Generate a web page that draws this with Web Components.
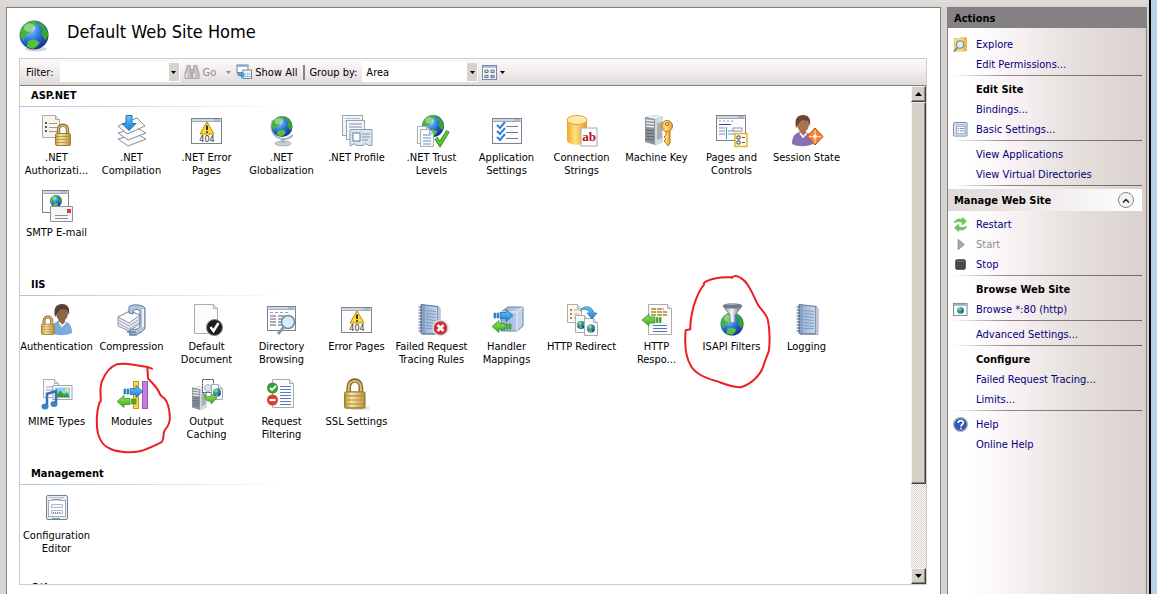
<!DOCTYPE html>
<html lang="en">
<head>
<meta charset="utf-8">
<title>Default Web Site Home</title>
<style>
html, body {
    margin: 0;
    height: 100%;
    overflow: hidden;
}

body {
    --link-colour: #00007b;
    --face-colour: #d4d0c8;
    font-family: Tahoma, "DejaVu Sans Condensed", "DejaVu Sans", sans-serif;
    font-size: 11px;
    line-height: 13px;
    color: #000;
    background: #b9d1ea;
}
</style>
</head>
<body>
<manager-window>
    <site-home heading="Default Web Site Home">
        <filter-bar slot="toolbar"></filter-bar>
        <feature-group heading="ASP.NET">
            <feature-item icon="authorization" label=".NET Authorizati..."></feature-item>
            <feature-item icon="compilation" label=".NET Compilation"></feature-item>
            <feature-item icon="errors" label=".NET Error Pages"></feature-item>
            <feature-item icon="globalization" label=".NET Globalization"></feature-item>
            <feature-item icon="profile" label=".NET Profile"></feature-item>
            <feature-item icon="trust" label=".NET Trust Levels"></feature-item>
            <feature-item icon="appsettings" label="Application Settings"></feature-item>
            <feature-item icon="connection" label="Connection Strings"></feature-item>
            <feature-item icon="machinekey" label="Machine Key"></feature-item>
            <feature-item icon="controls" label="Pages and Controls"></feature-item>
            <feature-item icon="session" label="Session State"></feature-item>
            <feature-item icon="smtp" label="SMTP E-mail"></feature-item>
        </feature-group>
        <feature-group heading="IIS">
            <feature-item icon="authentication" label="Authentication"></feature-item>
            <feature-item icon="compression" label="Compression"></feature-item>
            <feature-item icon="defaultdoc" label="Default Document"></feature-item>
            <feature-item icon="directory" label="Directory Browsing"></feature-item>
            <feature-item icon="errors" label="Error Pages"></feature-item>
            <feature-item icon="failed" label="Failed Request Tracing Rules"></feature-item>
            <feature-item icon="handlers" label="Handler Mappings"></feature-item>
            <feature-item icon="redirect" label="HTTP Redirect"></feature-item>
            <feature-item icon="response" label="HTTP&#10;Respo..."></feature-item>
            <feature-item icon="isapi" label="ISAPI Filters"><pen-circle slot="mark" shape="tall"></pen-circle></feature-item>
            <feature-item icon="logging" label="Logging"></feature-item>
            <feature-item icon="mime" label="MIME Types"></feature-item>
            <feature-item icon="modules" label="Modules"><pen-circle slot="mark" shape="small"></pen-circle></feature-item>
            <feature-item icon="caching" label="Output Caching"></feature-item>
            <feature-item icon="filtering" label="Request Filtering"></feature-item>
            <feature-item icon="ssl" label="SSL Settings"></feature-item>
        </feature-group>
        <feature-group heading="Management">
            <feature-item icon="config" label="Configuration Editor"></feature-item>
        </feature-group>
        <feature-group heading="Other"></feature-group>
    </site-home>
    <actions-pane slot="side" heading="Actions">
        <action-section>
            <action-item icon="explore">Explore</action-item>
            <action-item>Edit Permissions...</action-item>
        </action-section>
        <action-section heading="Edit Site">
            <action-item>Bindings...</action-item>
            <action-item icon="settings">Basic Settings...</action-item>
        </action-section>
        <action-section>
            <action-item>View Applications</action-item>
            <action-item>View Virtual Directories</action-item>
        </action-section>
        <action-section bar="Manage Web Site">
            <action-item icon="restart">Restart</action-item>
            <action-item icon="start" disabled>Start</action-item>
            <action-item icon="stop">Stop</action-item>
        </action-section>
        <action-section heading="Browse Web Site">
            <action-item icon="browse">Browse *:80 (http)</action-item>
        </action-section>
        <action-section>
            <action-item>Advanced Settings...</action-item>
        </action-section>
        <action-section heading="Configure">
            <action-item>Failed Request Tracing...</action-item>
            <action-item>Limits...</action-item>
        </action-section>
        <action-section>
            <action-item icon="help">Help</action-item>
            <action-item>Online Help</action-item>
        </action-section>
    </actions-pane>
</manager-window>

<script>
// ---- icon parts ----

const globe = (cx, cy, r) => `
<g transform="translate(${cx} ${cy}) scale(${r / 10})">
<circle r="10" fill="url(#sea)"/>
<path d="M-9 -4C-7 -8 -3 -10 1 -10L2 -7L-1 -5L-2 -2L-6 0L-7 4L-9.500 1Z" fill="#46b52e"/>
<path d="M3 -9.500C7 -8 9 -4 10 0L8 4L6 1L5 -1L6 -4L4 -6Z" fill="#3aa52b"/>
<path d="M-4 4L0 3L4 5L2 8L-1 9.600L-5 8Z" fill="#55c03a"/>
<ellipse cx="-3" cy="-5" rx="4" ry="3" fill="#fff" opacity=".4"/>
</g>`;

const page = (x, y, w, h, fill = '#fbfbfc') => `
<path d="M${x} ${y}h${w - 4}l4 4v${h - 4}h${-w}z" fill="${fill}" stroke="#a9adb3"/>
<path d="M${x + w - 4} ${y}v4h4" fill="#e4e6ea" stroke="#a9adb3"/>`;

const win = (x, y, w, h) => `
<rect x="${x}" y="${y}" width="${w}" height="${h}" fill="#fdfdfe" stroke="#7b8190"/>
<path d="M${x + 1} ${y + 1.5}h${w - 2}" stroke="#cfd6e2" stroke-width="2"/>
<path d="M${x + w - 7} ${y + 1.5}h6" stroke="#5c6474" stroke-dasharray="1 1"/>
<path d="M${x} ${y + 3}h${w}" stroke="#a4abb9"/>`;

const lock = (x, y, s) => `
<g transform="translate(${x} ${y}) scale(${s})">
<path d="M3.500 11V6C3.500 -.5 12.500 -.5 12.500 6V11" fill="none" stroke="#80642a" stroke-width="3.400"/>
<path d="M3.500 11V6C3.500 0 12.500 0 12.500 6V11" fill="none" stroke="#d9bd78" stroke-width="1.600"/>
<rect x=".5" y="9.500" width="15" height="12" rx="1.500" fill="url(#brass)" stroke="#a07c30"/>
<path d="M1 12.500h14M1 15.500h14M1 18.500h14" stroke="#b08a3a" stroke-width=".8"/>
</g>`;

const lines = (x, y, w, n, gap, colour) =>
  Array.from({ length: n }, (_, i) => `<path d="M${x} ${y + i * gap}h${w}" stroke="${colour}"/>`).join('');

const toRight = (x, y) => `
<g transform="translate(${x} ${y})" fill="#2f9be6" stroke="#1765ab" stroke-width=".7">
<path d="M0 4h1.500v5H0zM3 4h1.500v5H3z"/><path d="M6 3.500h6V.5l7 6-7 6v-3H6z" fill="url(#blue)"/></g>`;

const toLeft = (x, y) => `
<g transform="translate(${x} ${y})" fill="#5ac428" stroke="#2d8c17" stroke-width=".7">
<path d="M17.500 4H19v5h-1.500zM14.500 4H16v5h-1.500z"/><path d="M13 3.500H7V.5l-7 6 7 6v-3h6z" fill="url(#green)"/></g>`;

const server = (x, y, s = 1) => `
<g transform="translate(${x} ${y}) scale(${s})">
<path d="M0 2l11-2 7 2v25l-8 3-10-3z" fill="#8d949d"/>
<path d="M10 4l8-2v25l-8 4z" fill="#d6dadd"/>
<path d="M0 2l11-2 7 2-8 2z" fill="#eceff0"/>
<path d="M1 5l8 1M1 8l8 1M1 11l8 1" stroke="#e9edf0" stroke-width="1.500"/>
<path d="M1 15l8 1M1 18l8 1M1 21l8 1M1 24l8 1" stroke="#5c636d"/>
<path d="M12 8l5-1v16l-5 2z" fill="#a8aeb2"/></g>`;

const notebook = (x, y) => `
<g transform="translate(${x} ${y})">
<path d="M3 0l17 2v27l-17 0z" fill="url(#book)" stroke="#5a7095"/>
<path d="M20 2l2 2v26l-18 0-1-1h17z" fill="#e8eef5" stroke="#6c7d99" stroke-width=".7"/>
<path d="M6 0v29" stroke="#7089ad"/>
<path d="M8 6l10 1M8 9l10 1M8 12l10 1M8 15l10 1M8 18l10 1M8 21l10 1M8 24h10" stroke="#6f8fbc" stroke-width=".8"/>
<path d="M2.500 2v27" stroke="#50627f" stroke-width="4" stroke-dasharray="1 2"/></g>`;

const warning = `
${win(.5, 3.5, 30, 25)}
<path d="M16 7l7 12H9z" fill="#ffd92e" stroke="#b58b00" stroke-linejoin="round"/>
<path d="M16 10.500v4.500M16 16.300v1.500" stroke="#222" stroke-width="1.800"/>
<text x="16" y="27" font-size="8" font-family="DejaVu Sans" text-anchor="middle" fill="#333">404</text>`;

const person = (x, y, coat, hair, face) => `
<g transform="translate(${x} ${y})">
<path d="M0 29c0-8 3-11 8-12h5c5 1 8 4 8 12-6 3-15 3-21 0z" fill="${coat}"/>
<path d="M8 14h6v5l-3 3-4-3z" fill="${face}"/>
<path d="M8 18l3 4 4-4" fill="none" stroke="#fff" stroke-width="1.500"/>
<ellipse cx="11" cy="9" rx="6" ry="8" fill="${face}"/>
<path d="M4 13C2 3 6 0 11 0c6 0 8 4 7 11l-2-5-6-1-3 3z" fill="${hair}"/></g>`;

const ICONS = {
  site: `<ellipse cx="17" cy="29" rx="11" ry="2.500" fill="#999" opacity=".4"/>${globe(15, 15, 14.5)}`,
  authorization: `${page(1.5, .5, 17, 22, '#f8f4e8')}
<path d="M4 8h2M4 12h2M4 16h2" stroke="#555" stroke-width="2"/>${lines(8, 8.5, 8, 3, 4, '#999')}${lock(14, 9, 1)}`,
  compilation: `<g fill="#fbfbfc" stroke="#878e97">
<path d="M2 24l19-5 9 5-18 7z"/><path d="M2 18l19-5 9 5-18 7z"/><path d="M2 11l19-8 8 8-18 8z"/></g>
<path d="M10 .5h6v8h4l-7 7-7-7h4z" fill="url(#blue)" stroke="#1874bd"/>`,
  errors: warning,
  globalization: `<ellipse cx="17" cy="28.500" rx="8" ry="2.500" fill="#c6cdd3" stroke="#9aa3ab" stroke-width=".7"/>
<path d="M15 24h4v4h-4z" fill="#aeb8c0"/>
<path d="M7 5c-4 9 1 19 11 19 4 0 7-2 9-4" fill="none" stroke="#a4b3be" stroke-width="2"/>${globe(16, 11.5, 10.5)}`,
  profile: `<rect x="1.500" y=".5" width="20" height="20" fill="#f2f5f8" stroke="#99a4b1"/>
<path d="M4 3.500h15M4 6h15" stroke="#b1bcc9"/>
<rect x="5.500" y="5.500" width="18" height="19" fill="#f4f7fa" stroke="#99a4b1"/><path d="M8 9h13M8 12h13" stroke="#a6b3c3" stroke-width="1.500"/>
<path d="M9 14.500h22v16h-4l-1-1.500h-3l-1 1.500h-7l-1-1.500h-2l-1 1.500H9z" fill="#dce6ee" stroke="#8d9dac"/>
<rect x="12" y="18" width="7" height="8" fill="#fff" stroke="#5e7ba3"/><path d="M21 19h8M21 22h8M21 25h6" stroke="#7c95b3"/>`,
  trust: `${globe(17, 11, 11)}${page(1.5, 11.5, 13, 17)}${page(4.5, 14.5, 13, 17)}${lines(7, 20, 8, 4, 3, '#5f8fd0')}
<path d="M20 23l4 6 8-13" fill="none" stroke="#2f8d18" stroke-width="4"/><path d="M20 23l4 6 8-13" fill="none" stroke="#62d236" stroke-width="2"/>`,
  appsettings: `${win(1.5, 3.5, 29, 25)}${lines(15, 11.5, 12, 3, 6, '#6f7c8e')}
<path d="M6 10l3 3 5-6M6 16l3 3 5-6M6 22l3 3 5-6" fill="none" stroke="#2e83cc" stroke-width="2"/>`,
  connection: `<path d="M1 5v21c3 5 17 5 20 0V5z" fill="url(#gold)"/><ellipse cx="11" cy="5" rx="10" ry="4.500" fill="#ffe9a8" stroke="#e0a52f"/>
<rect x="15" y="13" width="16" height="18" fill="#fff" stroke="#aaa"/>
<text x="23" y="26" font-family="Liberation Serif" font-weight="bold" font-size="13" text-anchor="middle" fill="#b01217">ab</text>`,
  machinekey: `${server(4, 0)}<g stroke="#b07f1c" fill="url(#gold)"><path d="M25 15h4v13l-2 3-2-3-2-2 2-2-2-2 2-2z"/><circle cx="26" cy="11" r="5.500"/></g><circle cx="26" cy="9" r="1.500" fill="#fff" stroke="#8d6312"/>`,
  controls: `${win(.5, .5, 29, 25)}<path d="M3 6h14" stroke="#999" stroke-dasharray="2 2"/>${lines(3, 9.5, 12, 1, 1, '#2c4ea2')}
<path d="M3 13h6M3 16h6M3 19h6M12 16h7M12 19h7" stroke="#7c90b8"/><path d="M10.500 12v12" stroke="#37a4d8"/><rect x="17" y="13" width="9" height="3" fill="#fff" stroke="#8896ab"/>
<rect x="19" y="18.500" width="12" height="13" fill="#fffbe0" stroke="#dfb52e" stroke-width="1.500"/>
<path d="M21 21h3v3h-3zM21 26h3v3h-3z" fill="#fff" stroke="#4c4c5c"/><path d="M26 22.500h3M26 27.500h3" stroke="#4c4c8c"/>`,
  session: `${person(1, 0, '#8770b8', '#6b4433', '#a8744f')}
<path d="M24 13l8 8.500-8 8.500-8-8.500z" fill="#f2853a" stroke="#bb4d12"/><path d="M24 15v13M18 21.500h12" stroke="#ffe0c0"/><circle cx="24" cy="21.500" r="2" fill="#fff1d8"/>`,
  smtp: `${win(1.5, .5, 26, 22)}${globe(15, 11, 6)}
<path d="M9.500 16.500h22v15h-22z" fill="#f6f6f7" stroke="#8d949e"/><rect x="26" y="19" width="4" height="4" fill="#d63a3e"/>${lines(14, 25.5, 13, 2, 3, '#8b929c')}`,
  authentication: `${person(10, 0, '#7cabe0', '#54423a', '#8e6548')}${lock(0, 12, .86)}`,
  compression: `<path d="M2 13l12-6 10 4v9l-11 7-11-5z" fill="#e6e9ef" stroke="#8b92a5"/><path d="M2 13l12-6 10 4-11 8z" fill="#fdfdfe" stroke="#8a92a5"/>
<path d="M2 16l11 6 11-7M2 19l11 6 11-7" fill="none" stroke="#a5acbd"/>
<path d="M13 9V3c2-3 13-3 16 1v20c-3 6-12 8-16 5l2-4c4 1 8 0 9-3V7c-2-2-5-2-7 0v3z" fill="#b3c6dc" stroke="#5d7594"/>
<path d="M27 5v18" stroke="#eaf2f9" stroke-width="2"/>
<path d="M11 28h9M13 31h8" stroke="#6d839f" stroke-width="1.500"/>`,
  defaultdoc: `${page(3.5, .5, 23, 29)}<circle cx="23.500" cy="23.500" r="8" fill="#1d1d1f" stroke="#888"/><path d="M19.500 23l3 4 5-8" fill="none" stroke="#fff" stroke-width="2.500"/>`,
  directory: `${win(1.5, 2.5, 28, 24)}<path d="M4 8.500h18" stroke="#93a0b4" stroke-dasharray="3 2"/><path d="M4 12h6M12 12h6M4 15h6M12 15h4M4 18h6M12 18h4M4 21h6M12 21h6" stroke="#555d6c"/>
<path d="M17.500 23.500L12 30" stroke="#8a9aab" stroke-width="3"/><circle cx="22" cy="18" r="6.500" fill="#d8ecfa" stroke="#6d87a3" stroke-width="1.500"/>`,
  failed: `${notebook(2, .5)}<circle cx="24.500" cy="24" r="7.500" fill="#c92f31" stroke="#dadada" stroke-width="1.500"/><path d="M21.500 21l6 6M27.500 21l-6 6" stroke="#fff" stroke-width="2.500"/>`,
  handlers: `<path d="M10 8l7-5h15v19l-6 5H10z" fill="url(#book)" stroke="#70819c"/><path d="M10 8h16v19M26 8l6-5" fill="none" stroke="#eef3f9"/>${toRight(3, 5)}${toLeft(1, 16)}`,
  redirect: `${page(1.5, .5, 14, 18, '#fdf8ea')}<path d="M4 6h2M4 10h2M4 14h2" stroke="#8b6b2a" stroke-width="1.500"/>${lines(8, 6, 5, 3, 4, '#aaa')}
${page(9.5, 11.5, 13, 17)}${globe(15, 21, 4)}${page(18.5, 14.5, 13, 17)}${globe(25, 24.5, 4)}
<path d="M14 7C17 1 26 1 28 9h3l-5 6-5-6h3c-2-4-6-5-10-2z" fill="url(#blue)" stroke="#2273b5" stroke-width=".7"/>`,
  response: `${page(7.5, .5, 23, 30)}<path d="M10 5h13M10 8h16M10 11h16" stroke="#b0862a" stroke-width="1.500" stroke-dasharray="5 1"/>${lines(12, 21.5, 14, 3, 3, '#4b78bd')}${toLeft(1, 9.5)}`,
  isapi: `${globe(16, 20, 11.5)}<path d="M7 2c0-3 19-3 19 0l-7 9v7c-1 1-4 1-5 0v-7z" fill="url(#steel)" stroke="#66717f" stroke-width=".8"/><ellipse cx="16.500" cy="2.500" rx="9" ry="2" fill="#6d7b89"/>`,
  logging: notebook(5, .5),
  mime: `${page(2.5, .5, 15, 18)}${lines(5, 8, 9, 3, 3, '#8aa0c4')}
<rect x="12" y="6.500" width="19" height="14" fill="#fff" stroke="#96a3b3"/><path d="M14 8.500h15v10H14z" fill="#8ccbf2"/><path d="M14 18.500l5-7 4 4 3-2 3 5z" fill="#3c9b35"/><circle cx="26" cy="11" r="2" fill="#ffe065"/>
<path d="M6 27V15l9-3v12" fill="none" stroke="#3672b8" stroke-width="2.500"/><ellipse cx="4" cy="27.500" rx="3.500" ry="3" fill="#3b82cc"/><ellipse cx="13" cy="25" rx="3.500" ry="3" fill="#3b82cc"/>`,
  modules: `<rect x="17.500" y="2.500" width="5" height="27" fill="#fbd84e" stroke="#c09a1c"/><rect x="26.500" y="2.500" width="5" height="27" fill="#c87add" stroke="#a05bb4"/>
${toRight(8, 6)}${toLeft(1, 16)}`,
  caching: `${server(1, 7, .8)}
<rect x="11.500" y=".5" width="11" height="13" fill="#fff" stroke="#333" stroke-dasharray="2 1"/><circle cx="17" cy="9" r="3.500" fill="#d5e6f2" stroke="#9fb5c6"/>${page(20.5, 5.5, 11, 15)}${globe(26, 13.5, 4)}
<path d="M14 15c1 3 4 3 6 2v-2l6 4-6 6v-3c-4 1-7-2-6-7z" fill="url(#green)" stroke="#2d8c17" stroke-width=".7"/>`,
  filtering: `${page(6.5, .5, 21, 28)}${lines(14, 7.5, 11, 7, 3, '#5a7ebb')}
<circle cx="6.500" cy="9" r="5.500" fill="#35a037"/><path d="M4 9l2 2 4-4" fill="none" stroke="#fff" stroke-width="1.800"/>
<circle cx="6.500" cy="21" r="5.500" fill="#d8402a"/><path d="M3.500 21h6" stroke="#fff" stroke-width="2.200"/>`,
  ssl: `<ellipse cx="18" cy="29" rx="11" ry="2" fill="#bbb" opacity=".5"/>${lock(3, 0, 1.35)}`,
  config: `<rect x="5.500" y="2.500" width="21" height="24" rx="1.500" fill="#e8edf2" stroke="#758190"/>
<path d="M8 4.500h15" stroke="#b5becb"/>
<rect x="7.500" y="7.500" width="17" height="16" fill="#fff" stroke="#a0abbc"/>
<path d="M11.500 7.500v-1h8v1" fill="#fff" stroke="#8794a8"/>
<path d="M10.500 11.500h11v3h-11zM10.500 17.500h11v3h-11z" fill="#f4f7fa" stroke="#b0b9c8"/>
<path d="M12 19.500h8" stroke="#7688a3" stroke-dasharray="1 1"/>
<path d="M11 25.500h8" stroke="#4fb3c9"/>`,
  settings: `<rect x="1" y="1" width="29" height="29" rx="2" fill="#e3e9f0" stroke="#758aa3" stroke-width="2"/>
<rect x="7" y="9" width="19" height="16" fill="#fff" stroke="#8398b3" stroke-width="2"/><path d="M3 5h24" stroke="#a5b3c5" stroke-width="2"/>
<path d="M10 14h3M15 14h9M10 19h3M15 19h9" stroke="#6884a8" stroke-width="2"/>`,
  explore: `<path d="M3 3h11l2-2h13v29H3z" fill="#f5dc7c" stroke="#c5a03b"/><path d="M22 2h7v28h-7z" fill="#e5bd45"/><circle cx="15" cy="16" r="8" fill="#dcecf7" stroke="#77828c" stroke-width="2.500"/><path d="M10 22l-8 9" stroke="#888" stroke-width="4"/>`,
  restart: `<g fill="#6ccb55" stroke="#3c9e33"><path d="M3 13C4 5 13 2 20 6V1l9 8-9 8v-5c-6-3-12-3-17 1z"/><path d="M29 19c-1 8-10 11-17 7v5l-9-8 9-8v5c6 3 12 3 17-1z"/></g>`,
  start: `<path d="M11 5l13 11-13 11z" fill="#aaa" stroke="#8c8c8c" stroke-width="2"/>`,
  stop: `<rect x="6" y="6" width="20" height="20" rx="2" fill="#4a4a4c" stroke="#2d2d2f" stroke-width="2"/><path d="M8 9h16" stroke="#6c6c6e" stroke-width="3"/>`,
  browse: `<rect x="1" y="3" width="29" height="26" fill="#fbfcfd" stroke="#7a8296" stroke-width="2"/><path d="M2 6h28" stroke="#9eabc0" stroke-width="4"/>${globe(16, 18, 7)}`,
  help: `<circle cx="16" cy="16" r="14.500" fill="#2f58b5" stroke="#98a5bf" stroke-width="3"/><path d="M11 13c0-7 11-7 11-1 0 4-5 4-5 8M17 23v3" fill="none" stroke="#fff" stroke-width="3.500"/>`,
  find: `<g fill="#c4c2c2" stroke="#999" stroke-width="1.500"><path d="M6 3h7v8l2 4v14H2V16l3-6zM19 3h7l1 7 3 6v13H17V15l2-4z"/><path d="M13 11h6v7h-6z"/></g><path d="M5 19v8M20 19v8" stroke="#e8e6e6" stroke-width="3"/>`,
  showall: `<rect x="2" y="2" width="22" height="15" fill="#fff" stroke="#6f86a8" stroke-width="2"/><path d="M2 4h22" stroke="#88a0c4" stroke-width="3"/><rect x="14" y="12" width="17" height="17" fill="#eef3fa" stroke="#6f86a8" stroke-width="2"/>
<path d="M17 20h12M17 25h12" stroke="#5f8cc8" stroke-width="2" stroke-dasharray="3 2"/><path d="M2 17c0 6 4 8 8 8v4l8-7-8-7v4c-3 0-5-1-8-2z" fill="#3d9ad8"/>`,
  tiles: `<rect x="1" y="1" width="30" height="30" fill="#f4f6fb" stroke="#7482a4" stroke-width="2"/><path d="M2 4h28" stroke="#a9b7d6" stroke-width="4"/>
<g fill="#d5dfa6" stroke="#5d6e93" stroke-width="2"><path d="M6 11h7v5H6zM19 11h7v5h-7zM6 22h7v5H6z"/><path d="M19 22h7v5h-7z" fill="#c9b4e6"/></g>`
};

const GRADIENTS = `<defs>
<radialGradient id="sea" cx=".35" cy=".3" r=".75"><stop offset="0" stop-color="#8fd6ff"/><stop offset=".5" stop-color="#2b76dc"/><stop offset="1" stop-color="#122e8c"/></radialGradient>
<linearGradient id="brass"><stop offset="0" stop-color="#c49a42"/><stop offset=".35" stop-color="#fae6a8"/><stop offset="1" stop-color="#bd9038"/></linearGradient>
<linearGradient id="gold"><stop offset="0" stop-color="#f0a823"/><stop offset=".4" stop-color="#ffe083"/><stop offset="1" stop-color="#e99a1b"/></linearGradient>
<linearGradient id="blue" x2="0" y2="1"><stop offset="0" stop-color="#6dc6f8"/><stop offset="1" stop-color="#1b80d2"/></linearGradient>
<linearGradient id="green" x2="0" y2="1"><stop offset="0" stop-color="#98e35c"/><stop offset="1" stop-color="#3bab1f"/></linearGradient>
<linearGradient id="book"><stop offset="0" stop-color="#8faed4"/><stop offset="1" stop-color="#c8d8ec"/></linearGradient>
<linearGradient id="steel"><stop offset="0" stop-color="#6d7b89"/><stop offset=".45" stop-color="#f3f6f8"/><stop offset="1" stop-color="#53616f"/></linearGradient>
</defs>`;

class IisIcon extends HTMLElement {
  static get observedAttributes() {
    return ['name', 'size'];
  }

  constructor() {
    super();
    this.attachShadow({ mode: 'open' });
  }

  connectedCallback() {
    this.render();
  }

  attributeChangedCallback() {
    this.render();
  }

  render() {
    const size = this.getAttribute('size') || 32;
    this.shadowRoot.innerHTML = `
<style>
:host { display: block; flex: none; }
svg { display: block; overflow: visible; }
</style>
<svg width="${size}" height="${size}" viewBox="0 0 32 32" aria-hidden="true">${GRADIENTS}${ICONS[this.getAttribute('name')] || ''}</svg>`;
  }
}

customElements.define('iis-icon', IisIcon);

// ---- window frame ----

class ManagerWindow extends HTMLElement {
  constructor() {
    super();
    this.attachShadow({ mode: 'open' }).innerHTML = `
<style>
:host {
    display: flex;
    gap: 6px;
    box-sizing: border-box;
    height: 100vh;
    margin-right: 6px;
    padding: 7px 2px 0 6px;
    background: linear-gradient(#e0dcd9, #d8d4d0 8px);
    border-right: 2px solid #000;
}
::slotted(site-home) { flex: 1; min-width: 0; }
::slotted(actions-pane) { flex: 0 0 200px; }
</style>
<slot></slot>
<slot name="side"></slot>`;
  }
}

customElements.define('manager-window', ManagerWindow);

// ---- red pen drawing over a feature ----

const PEN_SHAPES = {
  small: {
    box: '222 258 240 285', width: 80, height: 95, left: 0, top: -10,
    path: 'M396 281L382 276L340 269C320 266 300 266 290 268C270 275 255 296 246 318C240 335 241 350 242 362C242 378 244 382 238 384C229 410 228 450 234 476C242 505 255 515 272 522C300 534 340 533 358 529C385 522 410 508 424 502C434 492 428 474 434 466C447 452 452 440 449 420C448 396 440 376 434 371C426 366 424 364 420 358C412 336 396 324 384 310L382 276'
  },
  tall: {
    box: '240 0 285 360', width: 95, height: 120, left: -14, top: -26,
    path: 'M396 24C400 14 414 18 422 24C442 34 456 66 472 101C484 122 500 130 504 152C510 180 510 225 506 245C500 262 495 268 492 283C482 318 450 345 422 352C395 352 370 340 345 332C310 322 284 310 272 286C256 260 254 215 257 181L271 178C270 150 276 128 281 108C290 80 298 60 312 44C306 34 340 26 352 24C370 20 386 22 398 22'
  }
};

class PenCircle extends HTMLElement {
  constructor() {
    super();
    this.attachShadow({ mode: 'open' });
  }

  connectedCallback() {
    const s = PEN_SHAPES[this.getAttribute('shape')];
    this.shadowRoot.innerHTML = `
<style>
:host {
    position: absolute;
    z-index: 2;
    left: ${s.left}px;
    top: ${s.top}px;
    pointer-events: none;
}
svg { display: block; }
</style>
<svg width="${s.width}" height="${s.height}" viewBox="${s.box}" aria-hidden="true">
<path d="${s.path}" fill="none" stroke="#ee1c24" stroke-width="6" stroke-linejoin="round" stroke-linecap="round"/>
</svg>`;
  }
}

customElements.define('pen-circle', PenCircle);

// ---- features ----

class FeatureItem extends HTMLElement {
  constructor() {
    super();
    this.attachShadow({ mode: 'open' }).innerHTML = `
<style>
:host {
    display: block;
    position: relative;
    width: 75px;
    min-height: 75px;
}
a {
    display: flex;
    flex-direction: column;
    align-items: center;
    gap: 4px;
    padding-top: 8px;
    color: inherit;
    text-align: center;
    text-decoration: none;
}
span { white-space: pre-line; }
</style>
<a href="#"><iis-icon></iis-icon><span></span></a>
<slot name="mark"></slot>`;
    this.shadowRoot.querySelector('iis-icon').setAttribute('name', this.getAttribute('icon'));
    this.shadowRoot.querySelector('span').textContent = this.getAttribute('label');
  }
}

customElements.define('feature-item', FeatureItem);

class FeatureGroup extends HTMLElement {
  constructor() {
    super();
    this.attachShadow({ mode: 'open' }).innerHTML = `
<style>
:host { display: block; margin-bottom: 18px; }
h2 {
    margin: 0;
    padding: 3px 0 4px 11px;
    font-size: 11px;
    line-height: 13px;
}
.rule {
    height: 1px;
    max-width: 270px;
    background: linear-gradient(90deg, #a9c4e4, #fff);
}
.items { display: flex; flex-wrap: wrap; margin-left: -1px; }
</style>
<h2></h2>
<div class="rule"></div>
<div class="items"><slot></slot></div>`;
    this.shadowRoot.querySelector('h2').textContent = this.getAttribute('heading');
  }
}

customElements.define('feature-group', FeatureGroup);

class ScrollRail extends HTMLElement {
  constructor() {
    super();
    this.attachShadow({ mode: 'open' }).innerHTML = `
<style>
:host {
    display: flex;
    flex-direction: column;
    width: 15px;
    background: repeating-conic-gradient(#d4d0c8 0 25%, #fff 0 50%) 0 0 / 2px 2px;
}
button, .thumb {
    box-sizing: border-box;
    background: var(--face-colour);
    border: 1px solid;
    border-color: #f4f2ee #404040 #404040 #f4f2ee;
    box-shadow: inset -1px -1px #8a8780;
}
button {
    display: grid;
    place-items: center;
    height: 16px;
    padding: 0;
}
.track { flex: 1; }
.thumb { height: 82%; }
</style>
<button aria-label="Scroll up"><svg width="7" height="4"><path d="M0 4h7L3.500 0z"/></svg></button>
<div class="track"><div class="thumb"></div></div>
<button aria-label="Scroll down"><svg width="7" height="4"><path d="M0 0h7L3.500 4z"/></svg></button>`;
  }
}

customElements.define('scroll-rail', ScrollRail);

class FilterBar extends HTMLElement {
  constructor() {
    super();
    this.attachShadow({ mode: 'open' }).innerHTML = `
<style>
:host {
    display: flex;
    align-items: center;
    box-sizing: border-box;
    height: 28px;
    padding-left: 6px;
    border: 1px solid #cfcbd0;
    border-bottom-color: #808080;
    background: linear-gradient(#fdf9fb, #f1ebec 50%, #dfd9d7);
    white-space: nowrap;
}
input, select, button {
    font: inherit;
    color: inherit;
    margin: 0;
    padding: 0;
    border: 0;
    border-radius: 0;
    background: none;
}
button { display: flex; align-items: center; gap: 3px; }
.combo {
    display: grid;
    grid-template-columns: 1fr 10px;
    box-sizing: border-box;
    height: 20px;
    background: #fff;
    border: 1px solid #fff;
}
.filter { width: 120px; margin-left: 6px; }
.group { width: 116px; margin-left: 5px; }
.combo input { min-width: 0; }
.combo select {
    grid-area: 1 / 1 / 2 / 3;
    appearance: none;
    padding-left: 3px;
}
.arrow {
    grid-area: 1 / 2;
    display: grid;
    place-items: center;
    background: #d6d3ce;
    pointer-events: none;
}
.go { margin-left: 4px; color: #8f8c8c; }
.go-menu { margin-left: 10px; }
.show { margin-left: 5px; }
.separator { width: 2px; height: 15px; margin: 0 4px 0 6px; background: #878485; }
.view { margin-left: 4px; }
</style>
<label for="filter">Filter:</label>
<span class="combo filter"><input id="filter" type="text"><button class="arrow" aria-label="Filter history"><svg width="5" height="3"><path d="M0 0h5L2.500 3z"/></svg></button></span>
<button class="go" disabled><iis-icon name="find" size="16"></iis-icon>Go</button>
<button class="go-menu" disabled aria-label="Go options"><svg width="5" height="3"><path d="M0 0h5L2.500 3z" fill="#8f8c8c"/></svg></button>
<button class="show"><iis-icon name="showall" size="16"></iis-icon>Show All</button>
<span class="separator"></span>
<label for="group">Group by:</label>
<span class="combo group"><select id="group"><option>Area</option><option>Category</option></select><span class="arrow"><svg width="5" height="3"><path d="M0 0h5L2.500 3z"/></svg></span></span>
<button class="view" aria-label="View"><iis-icon name="tiles" size="15"></iis-icon><svg width="5" height="3"><path d="M0 0h5L2.500 3z"/></svg></button>`;
  }
}

customElements.define('filter-bar', FilterBar);

class SiteHome extends HTMLElement {
  constructor() {
    super();
    this.attachShadow({ mode: 'open' }).innerHTML = `
<style>
:host {
    display: flex;
    flex-direction: column;
    box-sizing: border-box;
    padding: 0 13px 9px 12px;
    background: #fff;
    border: 1px solid #808080;
    border-bottom: 0;
}
header {
    display: flex;
    align-items: center;
    gap: 16px;
    box-sizing: border-box;
    height: 50px;
    padding-bottom: 2px;
}
header iis-icon { padding-top: 8px; }
h1 {
    margin: 0;
    font-size: 18px;
    line-height: 22px;
    font-weight: normal;
}
.list {
    flex: 1;
    display: flex;
    min-height: 0;
    border: 1px solid #ccc;
    border-top: 0;
}
.groups {
    flex: 1;
    min-width: 0;
    overflow: hidden;
}
</style>
<header><iis-icon name="site"></iis-icon><h1></h1></header>
<slot name="toolbar"></slot>
<div class="list">
    <div class="groups"><slot></slot></div>
    <scroll-rail></scroll-rail>
</div>`;
    this.shadowRoot.querySelector('h1').textContent = this.getAttribute('heading');
  }
}

customElements.define('site-home', SiteHome);

// ---- actions ----

class ActionItem extends HTMLElement {
  constructor() {
    super();
    this.attachShadow({ mode: 'open' }).innerHTML = `
<style>
:host { display: block; }
a {
    display: grid;
    grid-template-columns: 16px 1fr;
    gap: 7px;
    align-items: center;
    height: 20px;
    padding-left: 5px;
    color: var(--link-colour);
    text-decoration: none;
    white-space: nowrap;
}
:host([disabled]) a { color: #8f8c8c; }
</style>
<a href="#"><iis-icon size="15"></iis-icon><span><slot></slot></span></a>`;
    this.shadowRoot.querySelector('iis-icon').setAttribute('name', this.getAttribute('icon') || '');
    if (this.hasAttribute('disabled')) {
      this.shadowRoot.querySelector('a').setAttribute('aria-disabled', 'true');
    }
  }
}

customElements.define('action-item', ActionItem);

class ActionSection extends HTMLElement {
  constructor() {
    super();
    this.attachShadow({ mode: 'open' }).innerHTML = `
<style>
:host { display: block; }
:host::after {
    content: "";
    display: block;
    height: 1px;
    margin: 1px 4px 3px;
    background: linear-gradient(90deg, transparent, #8b8587 30%, #6d686a);
}
:host(:last-of-type)::after { display: none; }
h3 {
    margin: 0;
    font-size: 11px;
    line-height: 18px;
}
.heading { padding: 2px 0 0 28px; }
.bar {
    display: flex;
    align-items: center;
    justify-content: space-between;
    height: 22px;
    margin: 0 4px 3px 0;
    padding: 0 8px 0 6px;
    background: linear-gradient(90deg, #e0d9d7, #fff);
}
.bar h3 { padding-top: 2px; }
.bar button {
    display: grid;
    place-items: center;
    width: 16px;
    height: 16px;
    padding: 0;
    border: 1px solid #8a8689;
    border-radius: 50%;
    background: #f5f2f3;
}
[hidden] { display: none; }
</style>
<div class="bar" hidden><h3></h3><button aria-label="Collapse"><svg width="8" height="5"><path d="M1 4.500l3-3 3 3" fill="none" stroke="#222" stroke-width="1.500"/></svg></button></div>
<h3 class="heading" hidden></h3>
<slot></slot>`;
    const bar = this.shadowRoot.querySelector('.bar');
    const heading = this.shadowRoot.querySelector('.heading');
    if (this.hasAttribute('bar')) {
      bar.hidden = false;
      bar.querySelector('h3').textContent = this.getAttribute('bar');
    }
    if (this.hasAttribute('heading')) {
      heading.hidden = false;
      heading.textContent = this.getAttribute('heading');
    }
  }
}

customElements.define('action-section', ActionSection);

class ActionsPane extends HTMLElement {
  constructor() {
    super();
    this.attachShadow({ mode: 'open' }).innerHTML = `
<style>
:host {
    display: block;
    box-sizing: border-box;
    border: 1px solid #808080;
    border-bottom: 0;
    background: linear-gradient(90deg, #fff 10%, #f7eff2 38%, #ebe7e4 52%, #e3dcd9 72%, #d9d1cd);
}
h2 {
    margin: 0 0 6px;
    padding: 2px 0 0 6px;
    font-size: 11px;
    line-height: 18px;
    background: #838183;
}
</style>
<h2></h2>
<slot></slot>`;
    this.shadowRoot.querySelector('h2').textContent = this.getAttribute('heading');
  }
}

customElements.define('actions-pane', ActionsPane);
</script>
</body>
</html>
